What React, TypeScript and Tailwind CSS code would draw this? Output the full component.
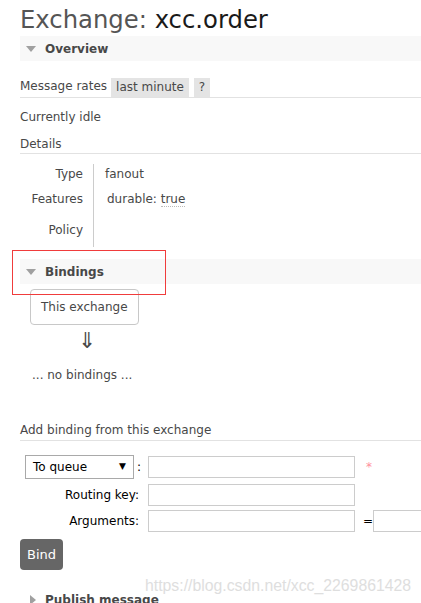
import React from 'react';

const font = { fontFamily: '"DejaVu Sans", Verdana, sans-serif' };

function SectionHeader({ title, open = true }: { title: string; open?: boolean }) {
  return (
    <div className="flex h-[25px] items-center bg-[#f8f8f8]">
      {open ? (
        <span className="ml-[6px] mr-[9px] inline-block h-0 w-0 border-x-[5px] border-t-[6px] border-x-transparent border-t-[#a0a0a0]" />
      ) : (
        <span className="ml-[10px] mr-[9px] inline-block h-0 w-0 border-y-[5px] border-l-[6px] border-y-transparent border-l-[#a0a0a0]" />
      )}
      <span className="text-[12px] font-bold text-[#484848]">{title}</span>
    </div>
  );
}

function DetailRow({ label, children, h }: { label: string; children?: React.ReactNode; h: string }) {
  return (
    <div className={`flex ${h} items-center`}>
      <div className="w-[63px] text-right">{label}</div>
      <div className="ml-[10px] flex h-full items-center border-l border-[#cccccc] pl-[11px]">{children}</div>
    </div>
  );
}

export default function App() {
  return (
    <div className="relative h-[603px] w-[421px] overflow-hidden bg-white text-[12px] text-[#484848]" style={font}>
      <div className="w-[700px] pl-[20px]">
        {/* Title */}
        <h1 className="h-[36px] pt-[6px] text-[24.3px] leading-[28px] text-[#555555]">
          Exchange: <span className="text-[#1a1a1a]">xcc.order</span>
        </h1>

        <div className="w-[401px]">
          <SectionHeader title="Overview" />
        </div>

        {/* Message rates */}
        <div className="mt-[16px] flex w-[401px] items-end border-b border-[#e2e2e2]">
          <span className="pb-[2px]">Message rates</span>
          <span className="ml-[4px] bg-[#e4e4e4] px-[5px] py-[2px] leading-[15px]">last minute</span>
          <span className="ml-[5px] bg-[#e4e4e4] px-[5px] py-[2px] leading-[15px]">?</span>
        </div>

        <div className="mt-[11px] leading-[16px]">Currently idle</div>
        <div className="mt-[11px] w-[401px] border-b border-[#e2e2e2] pb-[1px] leading-[16px]">Details</div>

        {/* Details table */}
        <div className="mt-[10px]">
          <DetailRow label="Type" h="h-[20px]">fanout</DetailRow>
          <DetailRow label="Features" h="h-[29px]">
            <span className="ml-[2px]">
              durable: <span className="border-b border-dotted border-[#bbbbbb]">true</span>
            </span>
          </DetailRow>
          <DetailRow label="Policy" h="h-[34px]" />
        </div>

        <div className="mt-[12px] w-[401px]">
          <SectionHeader title="Bindings" />
        </div>

        {/* Bindings */}
        <div className="ml-[10px] mt-[5px] inline-flex h-[36px] items-center rounded-[4px] border border-[#c8c8c8] px-[10px]">
          This exchange
        </div>
        <div className="ml-[58px] mt-[3px] text-[22px] leading-[26px]">⇓</div>
        <div className="ml-[12px] mt-[13px] leading-[16px]">... no bindings ...</div>

        {/* Add binding */}
        <div className="mt-[39px] w-[401px] border-b border-[#e2e2e2] pb-[2px] leading-[16px]">Add binding from this exchange</div>

        <div className="mt-[14px] flex items-center">
          <div className="ml-[5px] flex h-[24px] w-[109px] shrink-0 items-center justify-between border border-[#a9a9a9] bg-white px-[7px] text-[12px] text-black">
            <span>To queue</span>
            <span className="text-[9px]">▼</span>
          </div>
          <span className="ml-[3px] w-[11px] shrink-0 text-[12px] text-black">:</span>
          <div className="h-[22px] w-[207px] shrink-0 border border-[#cccccc]" />
          <span className="ml-[11px] text-[12px] text-[#ff8f9c]">*</span>
        </div>
        <div className="mt-[5px] flex items-center">
          <span className="w-[119px] shrink-0 text-right text-[12px] text-black">Routing key:</span>
          <div className="ml-[9px] h-[22px] w-[207px] shrink-0 border border-[#cccccc]" />
        </div>
        <div className="mt-[4px] flex items-center">
          <span className="w-[119px] shrink-0 text-right text-[12px] text-black">Arguments:</span>
          <div className="ml-[9px] h-[22px] w-[207px] shrink-0 border border-[#cccccc]" />
          <span className="ml-[8px] w-[10px] shrink-0 text-[12px] text-black">=</span>
          <div className="h-[22px] w-[80px] shrink-0 border border-[#cccccc]" />
        </div>

        <button className="mt-[7px] h-[31px] w-[43px] rounded-[4px] bg-[#666666] text-[13px] text-white">Bind</button>

        <div className="mt-[21px] flex items-center">
          <span className="ml-[10px] mr-[9px] inline-block h-0 w-0 border-y-[5px] border-l-[6px] border-y-transparent border-l-[#a0a0a0]" />
          <span className="text-[12px] font-bold text-[#484848]">Publish message</span>
        </div>
      </div>

      {/* annotation box */}
      <div className="absolute left-[12px] top-[250px] h-[45px] w-[154px] border border-[#f03c3c]" />
      {/* watermark */}
      <div
        className="absolute left-[145px] top-[574px] text-[15.8px] text-[#dedede]"
        style={{ fontFamily: '"Liberation Sans", Arial, sans-serif' }}
      >
        https://blog.csdn.net/xcc_2269861428
      </div>
    </div>
  );
}
